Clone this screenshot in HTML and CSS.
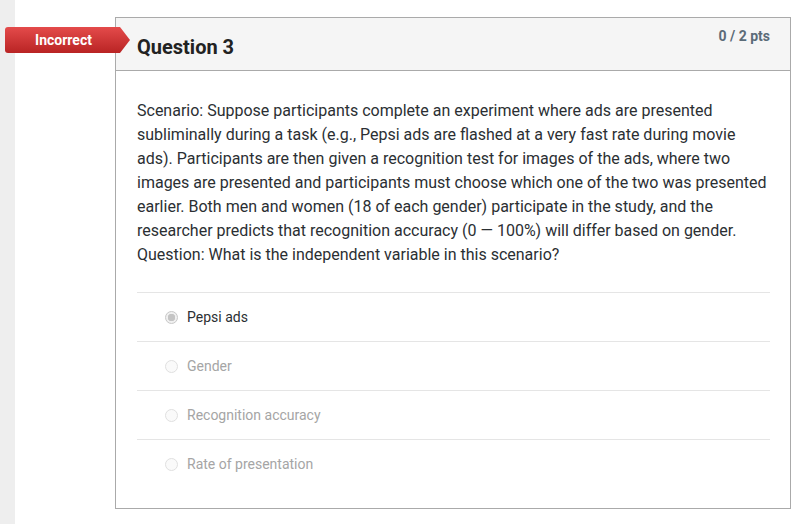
FILE: index.html
```html
<!DOCTYPE html>
<html>
<head>
<meta charset="utf-8">
<link rel="stylesheet" href="styles.css">
</head>
<body>
<div class="page">
  <div class="strip"></div>
  <main class="main">
    <div class="badge">Incorrect</div>
    <section class="card">
      <header class="card-head">
        <h2 class="title">Question 3</h2>
        <span class="pts">0 / 2 pts</span>
      </header>
      <div class="card-body">
        <p class="text">Scenario: Suppose participants complete an experiment where ads are presented subliminally during a task (e.g., Pepsi ads are flashed at a very fast rate during movie ads). Participants are then given a recognition test for images of the ads, where two images are presented and participants must choose which one of the two was presented earlier. Both men and women (18 of each gender) participate in the study, and the researcher predicts that recognition accuracy (0 — 100%) will differ based on gender. Question: What is the independent variable in this scenario?</p>
        <div class="answers">
          <div class="answer selected"><span class="radio"></span><span class="label">Pepsi ads</span></div>
          <div class="answer"><span class="radio"></span><span class="label">Gender</span></div>
          <div class="answer"><span class="radio"></span><span class="label">Recognition accuracy</span></div>
          <div class="answer"><span class="radio"></span><span class="label">Rate of presentation</span></div>
        </div>
      </div>
    </section>
  </main>
</div>
</body>
</html>
```
FILE: styles.css
```css
html, body {
  margin: 0;
  padding: 0;
  background: #fff;
}
body {
  font-family: Roboto, "Liberation Sans", Arial, sans-serif;
  color: #2d3b45;
}
.page {
  display: flex;
  min-height: 524px;
}
.strip {
  width: 15px;
  background: #eeeeee;
  flex: none;
}
.main {
  position: relative;
  padding: 17px 0 0 100px;
}
.badge {
  position: absolute;
  left: -10px;
  top: 27px;
  width: 125px;
  height: 26px;
  box-sizing: border-box;
  padding-right: 8px;
  border-radius: 3px 0 0 3px;
  background: linear-gradient(#e44b4b, #b92424);
  clip-path: polygon(0 0, calc(100% - 10px) 0, 100% 50%, calc(100% - 10px) 100%, 0 100%);
  color: #fff;
  font-weight: bold;
  font-size: 14px;
  line-height: 26px;
  text-align: center;
  z-index: 2;
}
.card {
  width: 676px;
  box-sizing: border-box;
  border: 1px solid #aaaaaa;
}
.card-head {
  display: flex;
  justify-content: space-between;
  height: 52px;
  background: #f5f5f5;
  border-bottom: 1px solid #aaaaaa;
  padding: 0 20px 0 21px;
}
.title {
  margin: 0;
  font-size: 20px;
  font-weight: bold;
  line-height: 24px;
  padding-top: 17px;
  color: #222;
}
.pts {
  font-size: 14px;
  font-weight: bold;
  color: #5b6b78;
  padding-top: 10px;
  line-height: 16px;
}
.card-body {
  padding: 28px 20px 20px 21px;
}
.text {
  margin: 0 0 25px;
  font-size: 16px;
  line-height: 24px;
  color: #2b2f33;
}
.answers {
  display: flex;
  flex-direction: column;
}
.answer {
  display: flex;
  align-items: center;
  gap: 9px;
  height: 48px;
  border-top: 1px solid #e5e5e5;
  padding-left: 28px;
  font-size: 14px;
  color: #a5a5a5;
}
.answer.selected {
  color: #2b2f33;
}
.radio {
  width: 13px;
  height: 13px;
  box-sizing: border-box;
  border-radius: 50%;
  border: 1px solid #e0e0e0;
  background: #fafafa;
  flex: none;
}
.answer.selected .radio {
  border: 1px solid #c8c8c8;
  background: radial-gradient(circle, #c4c4c4 0 3.5px, #f0f0f0 4px);
}
```
